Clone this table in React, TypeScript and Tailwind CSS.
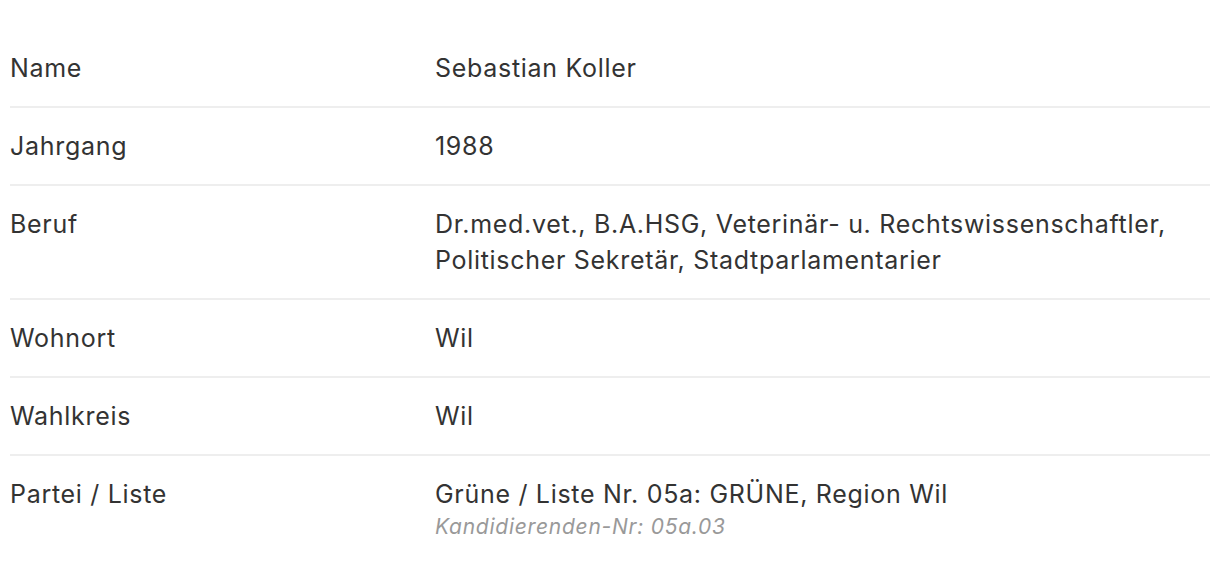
export default function App() {
  const rows = [
    { label: "Name", value: ["Sebastian Koller"] },
    { label: "Jahrgang", value: ["1988"] },
    {
      label: "Beruf",
      value: [
        "Dr.med.vet., B.A.HSG, Veterinär- u. Rechtswissenschaftler, Politischer Sekretär, Stadtparlamentarier",
      ],
    },
    { label: "Wohnort", value: ["Wil"] },
    { label: "Wahlkreis", value: ["Wil"] },
  ];

  return (
    <div className="min-h-screen bg-white px-[10px] pt-[30px] text-[#333] tracking-[0.7px] font-['Inter','Noto_Sans',sans-serif]">
      <div className="flex flex-col">
        {rows.map((row) => (
          <div key={row.label} className="flex border-b-2 border-[#eeeeee] py-[20px] text-[25px] leading-[36px]">
            <div className="w-[425px] shrink-0">{row.label}</div>
            <div className="w-[760px]">{row.value}</div>
          </div>
        ))}
        {/* last row without divider */}
        <div className="flex py-[20px] text-[25px] leading-[36px]">
          <div className="w-[425px] shrink-0">Partei / Liste</div>
          <div>
            <div>Grüne / Liste Nr. 05a: GRÜNE, Region Wil</div>
            <div className="text-[21px] leading-[30px] italic text-[#999] tracking-[0.75px]">Kandidierenden-Nr: 05a.03</div>
          </div>
        </div>
      </div>
    </div>
  );
}
